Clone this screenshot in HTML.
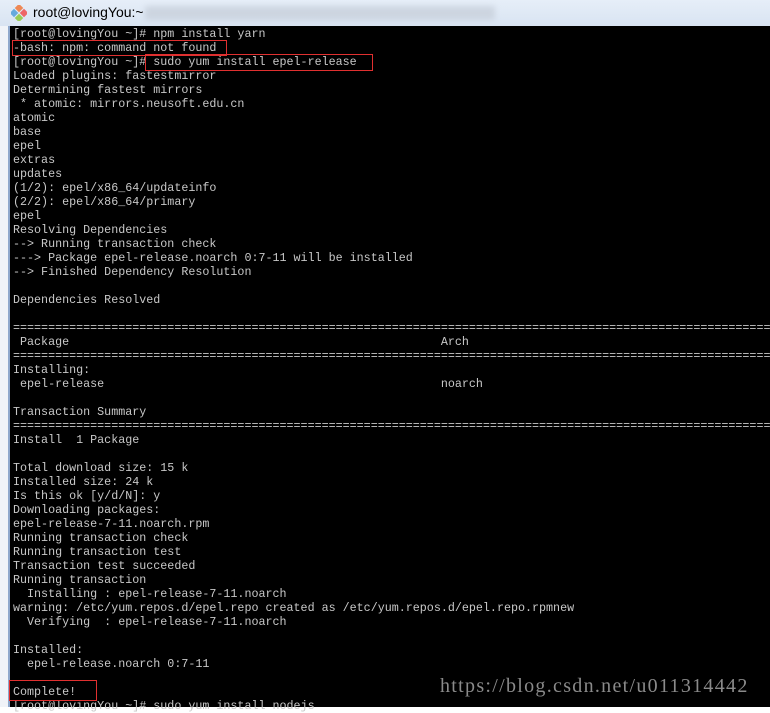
<!DOCTYPE html>
<html><head><style>
body{margin:0;width:770px;height:707px;overflow:hidden;background:#fff;position:relative;font-family:"Liberation Sans",sans-serif}
#title{position:absolute;left:0;top:0;width:770px;height:26px;background:linear-gradient(#e6eef8,#d9e4f2)}
#title span{position:absolute;left:33px;top:4px;font-size:14px;color:#000}
#blur{position:absolute;left:145px;top:6px;width:350px;height:14px;background:#c5cdd8;filter:blur(3px);opacity:.7}
#left{position:absolute;left:0;top:26px;width:8px;height:681px;background:#f0f3f8;border-right:2px solid #8fa8cc}
#term{position:absolute;left:10px;top:26px;width:760px;height:681px;background:#000}
pre{margin:0;position:absolute;left:3px;top:1px;font-family:"Liberation Mono",monospace;font-size:11.7px;line-height:14px;color:#c8c8c8}
.box{position:absolute;border:1px solid #e03030}
#wm{position:absolute;left:440px;top:675px;font-family:"Liberation Serif",serif;font-size:20px;color:#8a8a8a;letter-spacing:1.3px}
</style></head><body>
<div id="title"><svg style="position:absolute;left:11px;top:5px" width="16" height="16" viewBox="0 0 16 16"><rect x="5" y="0" width="6" height="6" fill="#e85" transform="rotate(45 8 3)"/><rect x="0" y="5" width="6" height="6" fill="#6ad" transform="rotate(45 3 8)"/><rect x="10" y="5" width="6" height="6" fill="#e66" transform="rotate(45 13 8)"/><rect x="5" y="10" width="6" height="6" fill="#9c5" transform="rotate(45 8 13)"/></svg><span>root@lovingYou:~</span><div id="blur"></div></div>
<div id="left"></div>
<div id="term"><pre>[root@lovingYou ~]# npm install yarn
-bash: npm: command not found
[root@lovingYou ~]# sudo yum install epel-release
Loaded plugins: fastestmirror
Determining fastest mirrors
 * atomic: mirrors.neusoft.edu.cn
atomic
base
epel
extras
updates
(1/2): epel/x86_64/updateinfo
(2/2): epel/x86_64/primary
epel
Resolving Dependencies
--> Running transaction check
---> Package epel-release.noarch 0:7-11 will be installed
--> Finished Dependency Resolution

Dependencies Resolved

============================================================================================================
 Package                                                     Arch
============================================================================================================
Installing:
 epel-release                                                noarch

Transaction Summary
============================================================================================================
Install  1 Package

Total download size: 15 k
Installed size: 24 k
Is this ok [y/d/N]: y
Downloading packages:
epel-release-7-11.noarch.rpm
Running transaction check
Running transaction test
Transaction test succeeded
Running transaction
  Installing : epel-release-7-11.noarch
warning: /etc/yum.repos.d/epel.repo created as /etc/yum.repos.d/epel.repo.rpmnew
  Verifying  : epel-release-7-11.noarch

Installed:
  epel-release.noarch 0:7-11

Complete!
[root@lovingYou ~]# sudo yum install nodejs</pre></div>
<div class="box" style="left:12px;top:40px;width:213px;height:14px"></div>
<div class="box" style="left:145px;top:54px;width:226px;height:15px"></div>
<div class="box" style="left:9px;top:680px;width:86px;height:19px"></div>
<div id="wm">https://blog.csdn.net/u011314442</div>
</body></html>
